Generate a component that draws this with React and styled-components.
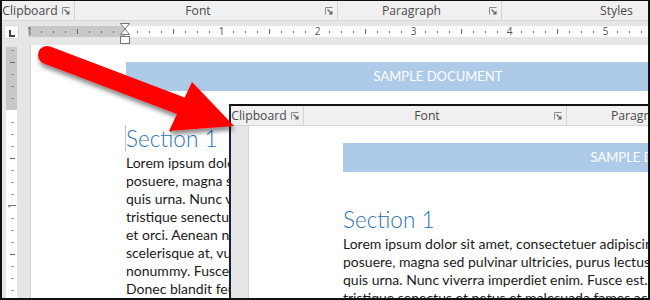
import React from 'react'
import styled, { createGlobalStyle } from 'styled-components'

const GlobalStyle = createGlobalStyle`
  html, body {
    margin: 0;
    padding: 0;
    background: #ffffff;
  }
  body {
    font-family: 'Lato', 'Liberation Sans', sans-serif;
  }
`

const Screen = styled.div`
  position: relative;
  width: 650px;
  height: 300px;
  box-sizing: border-box;
  border: 2px solid #111111;
  border-top-width: 1px;
  overflow: hidden;
  background: #ffffff;
`

const View = styled.div`
  display: flex;
  flex-direction: column;
  height: 100%;
  background: #ffffff;
`

const Window = styled.div`
  position: absolute;
  left: 227px;
  top: 103px;
  width: 440px;
  height: 220px;
  border-left: 2px solid #17223a;
  border-top: 2px solid #111111;
  background: #ffffff;
`

const Ribbon = styled.div`
  display: flex;
  flex-shrink: 0;
  height: 19px;
  background: #f0f0f0;
  border-bottom: 1px solid #d6d6d6;
`

const Group = styled.div`
  display: flex;
  align-items: center;
  flex-shrink: 0;
  box-sizing: border-box;
  width: ${(props) => props.$w}px;
  border-right: 1px solid #d4d4d4;
`

const GroupLabel = styled.span`
  flex: 1;
  text-align: center;
  font-family: 'Open Sans', 'Liberation Sans', sans-serif;
  font-size: 12.2px;
  color: #4a4a4a;
  white-space: nowrap;
`

const Launcher = styled.span`
  display: flex;
  align-items: center;
  justify-content: center;
  width: 16px;
  height: 19px;
`

const RulerBar = styled.div`
  display: flex;
  flex-shrink: 0;
  height: 24px;
  background: #e6e6e6;
`

const TabButton = styled.div`
  display: flex;
  align-items: center;
  justify-content: center;
  flex-shrink: 0;
  box-sizing: border-box;
  width: 15px;
  height: 14px;
  margin: 4px 9px 0 2px;
  background: #fbfbfb;
  border: 1px solid #d8d8d8;
`

const TabGlyph = styled.span`
  width: 4px;
  height: 5px;
  margin: 2px 0 0 1px;
  border-left: 2px solid #444444;
  border-bottom: 2px solid #444444;
`

const RulerTrack = styled.svg`
  flex: 1;
  height: 24px;
  font-family: 'Open Sans', 'Liberation Sans', sans-serif;
`

const Body = styled.div`
  display: flex;
  flex: 1;
  min-height: 0;
`

const Gutter = styled.div`
  flex-shrink: 0;
  width: ${(props) => props.$w}px;
  background: #e6e6e6;
  border-right: 1px solid #d2d2d2;
`

const VTrack = styled.svg`
  display: block;
  width: 11px;
  height: 260px;
  margin: 2px 0 0 4px;
  font-family: 'Open Sans', 'Liberation Sans', sans-serif;
`

const Page = styled.div`
  flex: 1;
  min-width: 0;
  overflow: hidden;
  background: #ffffff;
  padding: 17px 0 0 ${(props) => props.$inset}px;
`

const Banner = styled.div`
  width: 624px;
  height: 29px;
  line-height: 29px;
  background: #adcbe8;
  color: #ffffff;
  text-align: center;
  font-size: 13px;
`

const Heading = styled.div`
  display: inline-block;
  margin: 34px 0 2px;
  font-size: 22.5px;
  font-weight: 300;
  line-height: 27px;
  color: #2e74b5;
  white-space: nowrap;
  box-shadow: ${(props) => (props.$caret ? '-1px 0 0 #c4c4c4' : 'none')};
`

const Line = styled.div`
  font-size: 14px;
  line-height: 18px;
  color: #1a1a1a;
  white-space: nowrap;
`

const ArrowLayer = styled.svg`
  position: absolute;
  left: -2px;
  top: -1px;
  width: 650px;
  height: 300px;
  pointer-events: none;
`

const groups = [
  { label: 'Clipboard', width: 73 },
  { label: 'Font', width: 263 },
  { label: 'Paragraph', width: 164 },
  { label: 'Styles', width: 246 },
]

const lines = [
  'Lorem ipsum dolor sit amet, consectetuer adipiscing elit. Maecenas porttitor congue massa. Fusce',
  'posuere, magna sed pulvinar ultricies, purus lectus malesuada libero, sit amet commodo magna eros',
  'quis urna. Nunc viverra imperdiet enim. Fusce est. Vivamus a tellus. Pellentesque habitant morbi',
  'tristique senectus et netus et malesuada fames ac turpis egestas. Proin pharetra nonummy pede. Mauris',
  'et orci. Aenean nec lorem. In porttitor. Donec laoreet nonummy augue. Suspendisse dui purus,',
  'scelerisque at, vulputate vitae, pretium mattis, nunc. Mauris eget neque at sem venenatis eleifend. Ut',
  'nonummy. Fusce aliquet pede non pede. Suspendisse dapibus lorem pellentesque magna. Integer nulla.',
  'Donec blandit feugiat ligula. Donec hendrerit, felis et imperdiet euismod, purus ipsum pretium metus,',
]

const LauncherIcon = () => (
  <svg width="8" height="8" viewBox="0 0 8 8">
    <path d="M0.5 7.5 V0.5 H7.5" fill="none" stroke="#8a8a8a" strokeWidth="1" />
    <path d="M2.5 2.5 L6 6" stroke="#666666" strokeWidth="1.2" />
    <path d="M3.5 7.5 H7.5 V3.5 Z" fill="#666666" />
  </svg>
)

const HorizontalRuler = () => {
  const zero = 97
  const marks = []
  for (let k = -8; k <= 44; k += 1) {
    const x = zero + k * 12
    if (k === 0) continue
    if (k % 8 === 0) {
      marks.push(
        <text key={k} x={x + 0.5} y={14} fontSize="10" fill="#555555" textAnchor="middle">
          {Math.abs(k / 8)}
        </text>
      )
    } else if (k % 4 === 0) {
      marks.push(<rect key={k} x={x} y={8} width={1} height={5} fill="#666666" />)
    } else {
      marks.push(<rect key={k} x={x} y={10} width={1} height={2} fill="#777777" />)
    }
  }
  return (
    <RulerTrack>
      <rect x="0" y="5" width={zero} height="11" fill="#c8c8c8" />
      <rect x={zero} y="5" width="700" height="11" fill="#ffffff" />
      {marks}
      <path d="M92.5 2.5 H101.5 L97 8 Z" fill="#ffffff" stroke="#777777" />
      <path d="M97 8 L101.5 13.5 H92.5 Z" fill="#ffffff" stroke="#777777" />
      <rect x="92.5" y="15.5" width="9" height="7" fill="#ffffff" stroke="#777777" />
    </RulerTrack>
  )
}

const VerticalRuler = () => {
  const zero = 63
  const marks = []
  for (let k = -5; k <= 16; k += 1) {
    const y = zero + k * 12
    if (k === 0) continue
    if (k % 8 === 0) {
      marks.push(
        <text
          key={k}
          x={6}
          y={y + 3.5}
          fontSize="10"
          fill="#555555"
          textAnchor="middle"
          transform={`rotate(-90 6 ${y})`}
        >
          {Math.abs(k / 8)}
        </text>
      )
    } else if (k % 4 === 0) {
      marks.push(<rect key={k} x={4} y={y} width={5} height={1} fill="#666666" />)
    } else {
      marks.push(<rect key={k} x={5.5} y={y} width={2} height={1} fill="#777777" />)
    }
  }
  return (
    <VTrack>
      <rect x="0" y="0" width="11" height={zero} fill="#c8c8c8" />
      <rect x="0" y={zero} width="11" height="300" fill="#ffffff" />
      {marks}
    </VTrack>
  )
}

const WordView = ({ withRulers, gutter, inset, caret }) => (
  <View>
    <Ribbon>
      {groups.map((group) => (
        <Group key={group.label} $w={group.width}>
          <GroupLabel>{group.label}</GroupLabel>
          <Launcher>
            <LauncherIcon />
          </Launcher>
        </Group>
      ))}
    </Ribbon>
    {withRulers && (
      <RulerBar>
        <TabButton>
          <TabGlyph />
        </TabButton>
        <HorizontalRuler />
      </RulerBar>
    )}
    <Body>
      <Gutter $w={gutter}>{withRulers && <VerticalRuler />}</Gutter>
      <Page $inset={inset}>
        <Banner>SAMPLE DOCUMENT</Banner>
        <Heading $caret={caret}>Section 1</Heading>
        {lines.map((text) => (
          <Line key={text}>{text}</Line>
        ))}
      </Page>
    </Body>
  </View>
)

const Arrow = () => (
  <ArrowLayer viewBox="0 0 650 300">
    <defs>
      <filter id="arrowShadow" x="-20%" y="-20%" width="140%" height="160%">
        <feDropShadow dx="1" dy="4" stdDeviation="2.2" floodColor="#000000" floodOpacity="0.45" />
      </filter>
    </defs>
    <g filter="url(#arrowShadow)">
      <line x1="47" y1="55" x2="184" y2="107" stroke="#ff0000" strokeWidth="18" strokeLinecap="round" />
      <polygon points="192,82 234,126 169,131" fill="#ff0000" />
    </g>
  </ArrowLayer>
)

const App = () => (
  <>
    <GlobalStyle />
    <Screen>
      <WordView withRulers gutter={28} inset={95} caret />
      <Window>
        <WordView gutter={17} inset={94} />
      </Window>
      <Arrow />
    </Screen>
  </>
)

export default App
